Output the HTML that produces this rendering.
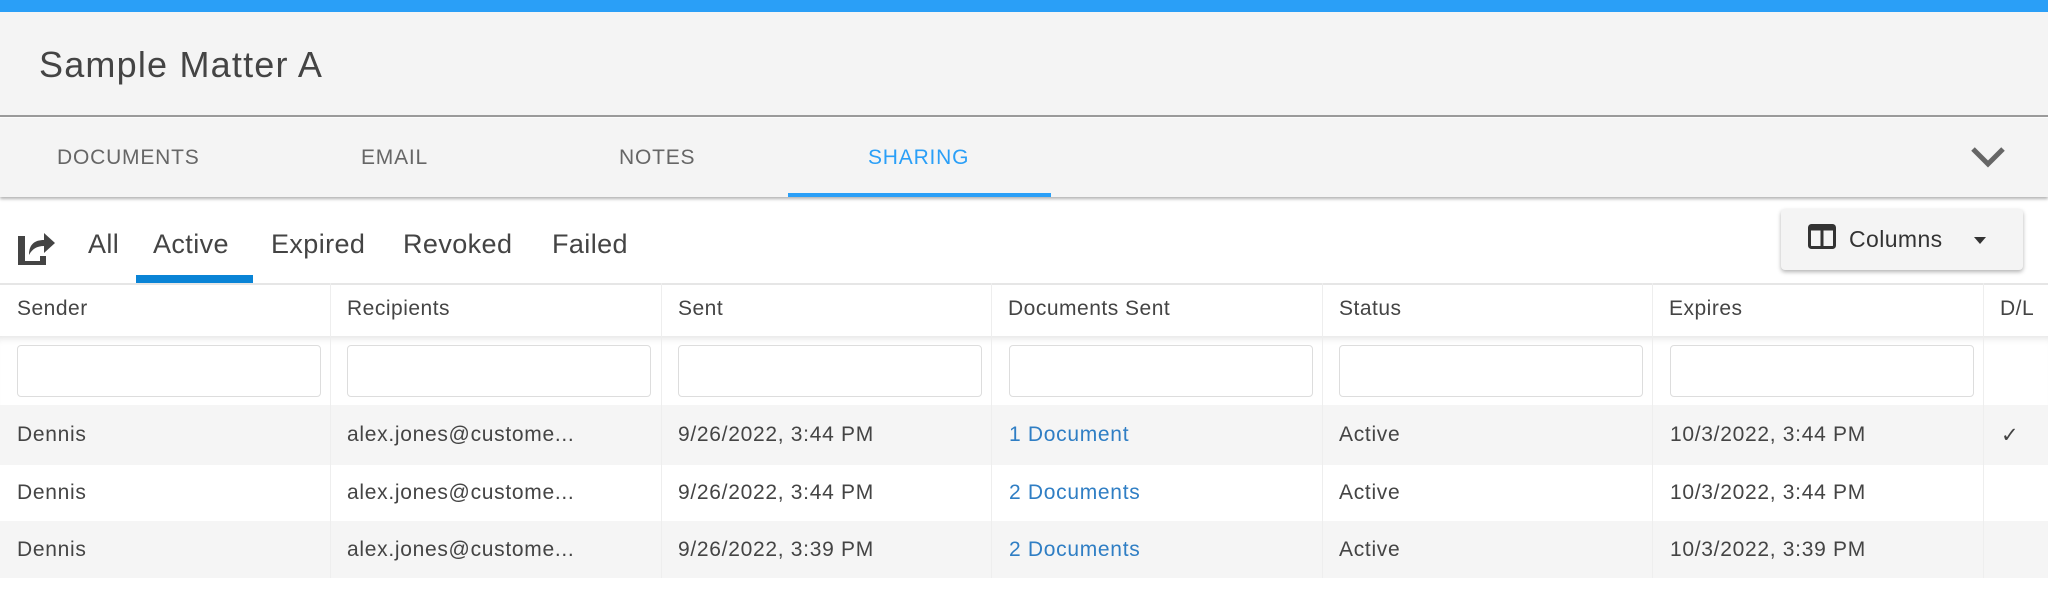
<!DOCTYPE html>
<html><head><meta charset="utf-8"><style>
*{box-sizing:border-box;margin:0;padding:0}
body{width:2048px;height:597px;background:#fff;font-family:"Liberation Sans",sans-serif;position:relative;overflow:hidden;color:#444}
.abs{position:absolute}
.blue{left:0;top:0;width:2048px;height:12px;background:#2a9ff7}
.hdr{left:0;top:12px;width:2048px;height:105px;background:#f4f4f4;border-bottom:2px solid #9a9a9a}
.title{left:39px;top:44px;font-size:36px;color:#444;letter-spacing:1.2px}
.tabs{left:0;top:118px;width:2048px;height:79px;background:#f4f4f4;box-shadow:0 2px 3px rgba(0,0,0,.3)}
.tab{top:146px;font-size:21px;color:#666;letter-spacing:0.8px}
.ul{left:788px;top:193px;width:263px;height:4px;background:#2a9ff7}
.f{top:229px;font-size:27px;color:#444;letter-spacing:0.4px}
.aul{left:136px;top:275px;width:117px;height:8px;background:#0a84d6}
.colbtn{left:1781px;top:209px;width:242px;height:61px;background:#f4f4f4;border-radius:4px;box-shadow:0 2px 4px rgba(0,0,0,.3)}
.th{top:283px;height:53px;border-top:2px solid #e6e6e6;font-size:21px;color:#444;padding:14px 0 0 17px;letter-spacing:0.5px}
.sep{top:283px;width:1px;height:295px;background:#eee}
.fr{top:336px;left:0;width:2048px;height:69px;box-shadow:inset 0 8px 8px -6px rgba(0,0,0,.12)}
.inp{top:345px;height:52px;border:1px solid #ddd;border-radius:4px;background:#fff}
.row{left:0;width:2048px}
.c{font-size:21px;color:#444;letter-spacing:0.7px}
.lk{color:#2f7ec4}
</style></head><body>
<div class="abs blue"></div>
<div class="abs hdr"></div>
<div class="abs title">Sample Matter A</div>
<div class="abs tabs"></div>
<div class="abs tab" style="left:57px">DOCUMENTS</div>
<div class="abs tab" style="left:361px">EMAIL</div>
<div class="abs tab" style="left:619px">NOTES</div>
<div class="abs tab" style="left:868px;color:#2a9ff7">SHARING</div>
<div class="abs ul"></div>
<svg class="abs" style="left:1970px;top:145px" width="36" height="24" viewBox="0 0 36 24"><path d="M3 4 L18 19 L33 4" fill="none" stroke="#666" stroke-width="5"/></svg>
<svg class="abs" style="left:15px;top:228px" width="42" height="38" viewBox="0 0 42 38"><path d="M3 8 H10 V33 H25 V28 H31 V37 H3 Z" fill="#444"/><path d="M14 27 C14 16 20 12 29 12 V5 L40 15 L29 25 V18 C22 18 17 21 14 27 Z" fill="#444"/></svg>
<div class="abs f" style="left:88px">All</div>
<div class="abs f" style="left:153px">Active</div>
<div class="abs f" style="left:271px">Expired</div>
<div class="abs f" style="left:403px">Revoked</div>
<div class="abs f" style="left:552px">Failed</div>
<div class="abs aul"></div>
<div class="abs colbtn"></div>
<svg class="abs" style="left:1808px;top:224px" width="28" height="25" viewBox="0 0 28 25"><rect x="1.5" y="1.5" width="25" height="22" rx="2" fill="none" stroke="#333" stroke-width="3"/><rect x="1.5" y="1.5" width="25" height="5" fill="#333"/><rect x="12.5" y="4" width="3" height="19" fill="#333"/></svg>
<div class="abs" style="left:1849px;top:226px;font-size:23px;color:#333;letter-spacing:0.4px">Columns</div>
<svg class="abs" style="left:1973px;top:236px" width="14" height="9" viewBox="0 0 14 9"><path d="M1 1 H13 L7 8 Z" fill="#333"/></svg>

<div class="abs fr"></div>
<div class="abs row" style="top:405px;height:60px;background:#f5f5f5"></div>
<div class="abs row" style="top:521px;height:57px;background:#f5f5f5"></div>

<div class="abs th" style="left:0;width:2048px;padding:0"></div>
<div class="abs th" style="left:0;border:none">Sender</div>
<div class="abs th" style="left:330px;border:none">Recipients</div>
<div class="abs th" style="left:661px;border:none">Sent</div>
<div class="abs th" style="left:991px;border:none">Documents Sent</div>
<div class="abs th" style="left:1322px;border:none">Status</div>
<div class="abs th" style="left:1652px;border:none">Expires</div>
<div class="abs th" style="left:1983px;border:none">D/L</div>

<div class="abs sep" style="left:330px"></div>
<div class="abs sep" style="left:661px"></div>
<div class="abs sep" style="left:991px"></div>
<div class="abs sep" style="left:1322px"></div>
<div class="abs sep" style="left:1652px"></div>
<div class="abs sep" style="left:1983px"></div>

<div class="abs inp" style="left:17px;width:304px"></div>
<div class="abs inp" style="left:347px;width:304px"></div>
<div class="abs inp" style="left:678px;width:304px"></div>
<div class="abs inp" style="left:1009px;width:304px"></div>
<div class="abs inp" style="left:1339px;width:304px"></div>
<div class="abs inp" style="left:1670px;width:304px"></div>

<div class="abs c" style="left:17px;top:423px">Dennis</div>
<div class="abs c" style="left:347px;top:423px">alex.jones@custome...</div>
<div class="abs c" style="left:678px;top:423px">9/26/2022, 3:44 PM</div>
<div class="abs c lk" style="left:1009px;top:423px">1 Document</div>
<div class="abs c" style="left:1339px;top:423px">Active</div>
<div class="abs c" style="left:1670px;top:423px">10/3/2022, 3:44 PM</div>
<div class="abs c" style="left:2001px;top:423px">✓</div>

<div class="abs c" style="left:17px;top:481px">Dennis</div>
<div class="abs c" style="left:347px;top:481px">alex.jones@custome...</div>
<div class="abs c" style="left:678px;top:481px">9/26/2022, 3:44 PM</div>
<div class="abs c lk" style="left:1009px;top:481px">2 Documents</div>
<div class="abs c" style="left:1339px;top:481px">Active</div>
<div class="abs c" style="left:1670px;top:481px">10/3/2022, 3:44 PM</div>

<div class="abs c" style="left:17px;top:538px">Dennis</div>
<div class="abs c" style="left:347px;top:538px">alex.jones@custome...</div>
<div class="abs c" style="left:678px;top:538px">9/26/2022, 3:39 PM</div>
<div class="abs c lk" style="left:1009px;top:538px">2 Documents</div>
<div class="abs c" style="left:1339px;top:538px">Active</div>
<div class="abs c" style="left:1670px;top:538px">10/3/2022, 3:39 PM</div>
</body></html>
